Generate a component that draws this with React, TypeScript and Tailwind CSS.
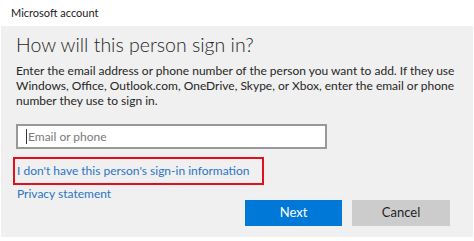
import React from 'react';

const font = { fontFamily: 'Lato, "Noto Sans", sans-serif' };

const App = () => {
  return (
    <div className="w-[474px] h-[241px] bg-white overflow-hidden" style={font}>
      <div className="h-[26px] pl-[11px] flex items-center text-[11px] text-[#1a1a1a]">
        Microsoft account
      </div>
      <div className="mx-[1px] h-[211px] bg-[#f0f0f0] pl-[15px] flex flex-col">
        <h1 className="mt-[5px] text-[19.5px] leading-[28px] font-light text-[#1f1f1f] whitespace-nowrap">
          How will this person sign in?
        </h1>
        <p className="mt-[4px] text-[12px] leading-[15px] text-[#262626] whitespace-nowrap">
          Enter the email address or phone number of the person you want to add. If they use
          <br />
          Windows, Office, Outlook.com, OneDrive, Skype, or Xbox, enter the email or phone
          <br />
          number they use to sign in.
        </p>
        <div className="mt-[16px] w-[311px] h-[25px] bg-white border-2 border-[#999999] flex items-center pl-[8px]">
          <span className="w-px h-[15px] bg-[#333]" />
          <span className="ml-[1px] text-[12px] text-[#7a7a7a]">Email or phone</span>
        </div>
        <div className="mt-[8px] -ml-[3px] w-[251px] h-[28px] border-2 border-[#e2101f] flex items-center pl-[2px]">
          <span className="text-[12px] text-[#2c74c8] whitespace-nowrap">I don't have this person's sign-in information</span>
        </div>
        <div className="mt-[1px] ml-[1px] text-[12px] leading-[16px] text-[#2c74c8]">Privacy statement</div>
        <div className="-mt-[2px] flex justify-end gap-[10px] pr-[23px]">
          <button className="w-[97px] h-[26px] bg-[#0078d7] text-white text-[13px]">Next</button>
          <button className="w-[98px] h-[26px] bg-[#cccccc] text-[#1f1f1f] text-[13px]">Cancel</button>
        </div>
      </div>
    </div>
  );
};

export default App;
